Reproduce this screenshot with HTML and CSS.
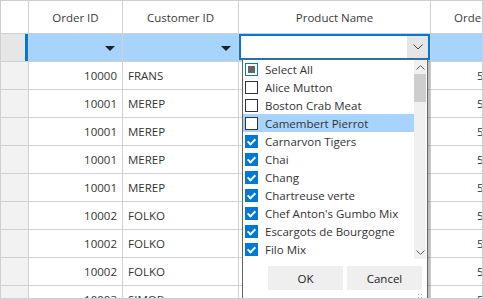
FILE: index.html
```html
<!DOCTYPE html>
<html lang="en">
<head>
  <meta charset="UTF-8" />
  <title>Grid Filter</title>
  <link rel="stylesheet" href="styles.css">
</head>
<body>
  <div class="grid">
    <table class="grid-table">
      <colgroup>
        <col class="c-rowhead"><col class="c-order"><col class="c-cust"><col class="c-prod"><col class="c-more">
      </colgroup>
      <thead>
        <tr class="head-row">
          <th class="rowhead"></th>
          <th>Order ID</th>
          <th>Customer ID</th>
          <th>Product Name</th>
          <th class="left">Order Date</th>
        </tr>
      </thead>
      <tbody>
        <tr class="filter-row">
          <td class="rowhead current"></td>
          <td><span class="tri"></span></td>
          <td><span class="tri"></span></td>
          <td class="combo-cell">
            <div class="combo">
              <span class="combo-text"></span>
              <span class="combo-btn">
                <svg width="10" height="6" viewBox="0 0 10 6"><path d="M0.5 0.5 L5 5 L9.5 0.5" fill="none" stroke="#444" stroke-width="1"/></svg>
              </span>
            </div>
          </td>
          <td></td>
        </tr>
        <tr><td class="rowhead"></td><td class="num">10000</td><td>FRANS</td><td></td><td class="date">5/4/1996</td></tr>
        <tr><td class="rowhead"></td><td class="num">10001</td><td>MEREP</td><td></td><td class="date">5/4/1996</td></tr>
        <tr><td class="rowhead"></td><td class="num">10001</td><td>MEREP</td><td></td><td class="date">5/4/1996</td></tr>
        <tr><td class="rowhead"></td><td class="num">10001</td><td>MEREP</td><td></td><td class="date">5/4/1996</td></tr>
        <tr><td class="rowhead"></td><td class="num">10001</td><td>MEREP</td><td></td><td class="date">5/4/1996</td></tr>
        <tr><td class="rowhead"></td><td class="num">10002</td><td>FOLKO</td><td></td><td class="date">5/5/1996</td></tr>
        <tr><td class="rowhead"></td><td class="num">10002</td><td>FOLKO</td><td></td><td class="date">5/5/1996</td></tr>
        <tr><td class="rowhead"></td><td class="num">10002</td><td>FOLKO</td><td></td><td class="date">5/5/1996</td></tr>
        <tr><td class="rowhead"></td><td class="num">10003</td><td>SIMOB</td><td></td><td class="date">5/6/1996</td></tr>
      </tbody>
    </table>

    <div class="popup">
      <div class="popup-body">
        <ul class="list">
          <li><span class="box partial"></span>Select All</li>
          <li><span class="box"></span>Alice Mutton</li>
          <li><span class="box"></span>Boston Crab Meat</li>
          <li class="hover"><span class="box"></span>Camembert Pierrot</li>
          <li><span class="box checked"></span>Carnarvon Tigers</li>
          <li><span class="box checked"></span>Chai</li>
          <li><span class="box checked"></span>Chang</li>
          <li><span class="box checked"></span>Chartreuse verte</li>
          <li><span class="box checked"></span>Chef Anton's Gumbo Mix</li>
          <li><span class="box checked"></span>Escargots de Bourgogne</li>
          <li><span class="box checked"></span>Filo Mix</li>
        </ul>
        <div class="scrollbar">
          <span class="arrow">
            <svg width="9" height="5" viewBox="0 0 9 5"><path d="M0.5 4.5 L4.5 0.5 L8.5 4.5" fill="none" stroke="#606060" stroke-width="1"/></svg>
          </span>
          <span class="thumb"></span>
          <span class="track"></span>
          <span class="arrow">
            <svg width="9" height="5" viewBox="0 0 9 5"><path d="M0.5 0.5 L4.5 4.5 L8.5 0.5" fill="none" stroke="#606060" stroke-width="1"/></svg>
          </span>
        </div>
      </div>
      <div class="popup-buttons">
        <button class="btn">OK</button>
        <button class="btn">Cancel</button>
      </div>
      <span class="grip"></span>
    </div>
  </div>
</body>
</html>
```

FILE: styles.css
```css
body {
  margin: 0;
  padding: 0;
  font-family: 'Open Sans', 'Noto Sans', sans-serif;
  font-size: 11.5px;
  color: #333;
  background: #fff;
}

.grid {
  position: relative;
  width: 483px;
  height: 299px;
  overflow: hidden;
  box-sizing: border-box;
  border: 1px solid #cfcfcf;
}

.grid-table {
  border-collapse: collapse;
  table-layout: fixed;
  width: 520px;
  margin: -1px 0 0 -1px;
}

.c-rowhead { width: 28px; }
.c-order { width: 94px; }
.c-cust { width: 116px; }
.c-prod { width: 192px; }
.c-more { width: 90px; }

th, td {
  border: 1px solid #d0d0d0;
  padding: 0 5px;
  white-space: nowrap;
  overflow: hidden;
  height: 28px;
  box-sizing: border-box;
}

th {
  font-weight: normal;
  height: 33px;
  text-align: center;
  color: #3a3a3a;
}

th.left {
  text-align: left;
  padding-left: 23px;
}

.rowhead {
  background: #f2f2f2;
  padding: 0;
}

th.rowhead {
  background: #fff;
}

.filter-row td {
  background: #a6d4fc;
  text-align: right;
  height: 28px;
}

.filter-row td.rowhead {
  background: #e6e6e6;
}

.filter-row td.current {
  box-shadow: inset -3px 0 0 #0078d7;
}

.tri {
  display: inline-block;
  width: 0;
  height: 0;
  border-left: 5px solid transparent;
  border-right: 5px solid transparent;
  border-top: 5px solid #222;
  margin-right: 2px;
  vertical-align: middle;
}

.filter-row td.combo-cell {
  padding: 0;
  vertical-align: top;
}

.combo {
  display: flex;
  height: 26px;
  box-sizing: border-box;
  border: 2px solid #0078d7;
  background: #fff;
}

.combo-text {
  flex: 1;
}

.combo-btn {
  width: 21px;
  background: #e5e5e5;
  display: flex;
  align-items: center;
  justify-content: center;
}

.num {
  text-align: right;
}

.date {
  padding-left: 46px;
}

/* filter popup */
.popup {
  position: absolute;
  left: 241px;
  top: 58px;
  width: 186px;
  height: 250px;
  box-sizing: border-box;
  background: #fff;
  border: 1px solid #646464;
  box-shadow: 2px 2px 1px rgba(0,0,0,0.25);
}

.popup-body {
  display: flex;
  height: 199px;
}

.list {
  list-style: none;
  margin: 0;
  padding: 0;
  flex: 1;
}

.list li {
  display: flex;
  align-items: center;
  height: 18px;
  padding-left: 2px;
  color: #333;
}

.list li.hover {
  background: #a6d4fc;
}

.box {
  width: 13px;
  height: 13px;
  box-sizing: border-box;
  border: 1px solid #333;
  background: #fff;
  margin-right: 7px;
  position: relative;
}

.box.partial {
  border-color: #0078d7;
}

.box.partial::after {
  content: "";
  position: absolute;
  left: 2px;
  top: 2px;
  width: 7px;
  height: 7px;
  background: #666;
}

.box.checked {
  background: #0078d7;
  border-color: #0078d7;
}

.box.checked::after {
  content: "";
  position: absolute;
  left: 3px;
  top: 1px;
  width: 3px;
  height: 6px;
  border: solid #fff;
  border-width: 0 2px 2px 0;
  transform: rotate(45deg);
}

.scrollbar {
  width: 12px;
  background: #f0f0f0;
  display: flex;
  flex-direction: column;
  margin-right: 1px;
}

.arrow {
  height: 14px;
  display: flex;
  align-items: center;
  justify-content: center;
}

.thumb {
  height: 28px;
  background: #cdcdcd;
}

.track {
  flex: 1;
}

.popup-buttons {
  display: flex;
  gap: 4px;
  padding: 7px 0 0 25px;
}

.btn {
  width: 75px;
  height: 24px;
  border: none;
  background: #efefef;
  font-family: inherit;
  font-size: 11.5px;
  color: #222;
}

.grip {
  position: absolute;
  right: 5px;
  top: 233px;
  width: 5px;
  height: 5px;
  background: radial-gradient(circle, #bbb 1px, transparent 1px) 0 0 / 3px 3px;
}
```
